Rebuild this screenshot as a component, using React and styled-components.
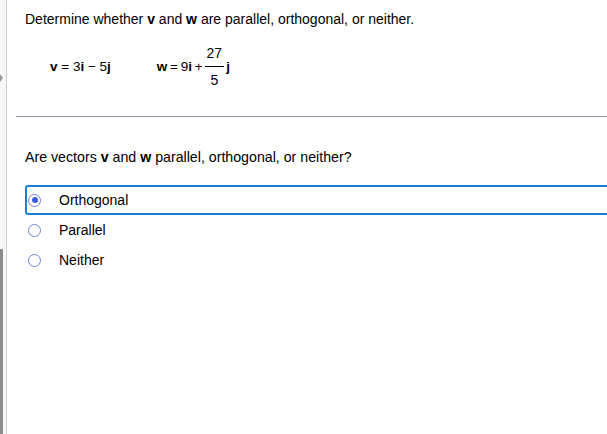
import React from 'react';
import styled, { createGlobalStyle } from 'styled-components';

const Global = createGlobalStyle`
    html, body {
        margin: 0;
        padding: 0;
        background: #fff;
    }
    body {
        font-family: "Liberation Sans", Arial, sans-serif;
        color: #000;
    }
`;

const Page = styled.div`
    display: flex;
    width: 607px;
    height: 434px;
    overflow: hidden;
`;

const Gutter = styled.div`
    position: relative;
    width: 6px;
    flex-shrink: 0;
    background: #f7f7f7;
    border-right: 1px solid #c9ceda;
`;

const GutterArrow = styled.div`
    position: absolute;
    top: 74px;
    left: 0;
    width: 0;
    height: 0;
    border-top: 4px solid transparent;
    border-bottom: 4px solid transparent;
    border-left: 3px solid #9a9a9a;
`;

const GutterBar = styled.div`
    position: absolute;
    top: 249px;
    bottom: 0;
    left: 0;
    width: 3px;
    background: #8c8c8c;
`;

const Content = styled.div`
    flex: 1;
    padding-top: 11px;
`;

const Prompt = styled.p`
    margin: 0 0 0 18px;
    font-size: 14px;
    line-height: 16px;
`;

const Equations = styled.div`
    display: flex;
    align-items: center;
    margin: 17px 0 0 43px;
    height: 44px;
    font-size: 13.5px;
`;

const Eq = styled.div`
    display: flex;
    align-items: center;
    margin-right: ${({ gap }) => gap || 0}px;
    white-space: pre;
`;

const Frac = styled.span`
    display: inline-flex;
    flex-direction: column;
    align-items: center;
    margin: 0 2px 0 2px;
    font-size: 14px;
    line-height: 16px;
`;

const Num = styled.span`
    padding: 0 2px 5px;
    border-bottom: 1px solid #000;
`;

const Den = styled.span`
    padding-top: 5px;
`;

const Rule = styled.hr`
    margin: 28px 0 0 9px;
    border: none;
    border-top: 1px solid #8d93a0;
    height: 0;
`;

const Question = styled.p`
    margin: 32px 0 0 18px;
    font-size: 14.2px;
    line-height: 16px;
`;

const Options = styled.div`
    display: flex;
    flex-direction: column;
    margin: 20px 0 0 18px;
`;

const Option = styled.label`
    display: flex;
    align-items: center;
    height: 30px;
    box-sizing: border-box;
    font-size: 14px;
    border: 2px solid ${({ selected }) => (selected ? '#1a7fd4' : 'transparent')};
    border-right: none;
    border-radius: 3px 0 0 3px;
    margin-right: -4px;
`;

const Radio = styled.span`
    width: 13px;
    height: 13px;
    box-sizing: border-box;
    border-radius: 50%;
    border: 1.5px solid #6f86d8;
    margin: 0 18px 0 1px;
    display: flex;
    align-items: center;
    justify-content: center;
    &::after {
        content: '';
        display: ${({ checked }) => (checked ? 'block' : 'none')};
        width: 6px;
        height: 6px;
        border-radius: 50%;
        background: #3b5bd6;
    }
`;

const options = ['Orthogonal', 'Parallel', 'Neither'];

export default function App() {
    return (
        <Page>
            <Global />
            <Gutter>
                <GutterArrow />
                <GutterBar />
            </Gutter>
            <Content>
                <Prompt>
                    Determine whether <b>v</b> and <b>w</b> are parallel, orthogonal, or neither.
                </Prompt>
                <Equations>
                    <Eq gap={46}>
                        <b>v</b> = 3<b>i</b> − 5<b>j</b>
                    </Eq>
                    <Eq>
                        <b>w</b>{'\u2009=\u2009'}9<b>i</b>{'\u2009+'}
                        <Frac>
                            <Num>27</Num>
                            <Den>5</Den>
                        </Frac>
                        <b>j</b>
                    </Eq>
                </Equations>
                <Rule />
                <Question>
                    Are vectors <b>v</b> and <b>w</b> parallel, orthogonal, or neither?
                </Question>
                <Options>
                    {options.map((o, i) => (
                        <Option key={o} selected={i === 0}>
                            <Radio checked={i === 0} />
                            {o}
                        </Option>
                    ))}
                </Options>
            </Content>
        </Page>
    );
}
